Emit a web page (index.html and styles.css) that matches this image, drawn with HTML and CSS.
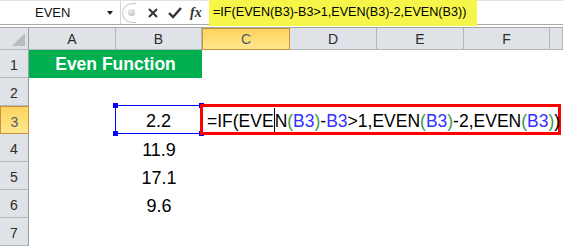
FILE: index.html
```html
<!DOCTYPE html>
<html lang="en">
<head>
  <meta charset="UTF-8">
  <title>Even Function</title>
  <link rel="stylesheet" href="styles.css">
</head>
<body>
  <!-- Formula Bar -->
  <div class="formula-bar">
    <div class="name-box">
      <span class="name">EVEN</span>
      <span class="drop"></span>
    </div>
    <div class="bar-tools">
      <span class="grip"><span class="grip-dot"></span></span>
      <svg class="tool" width="12" height="12" viewBox="0 0 12 12">
        <path d="M2 2 L10 10 M10 2 L2 10" stroke="#333" stroke-width="2" fill="none"/>
      </svg>
      <svg class="tool" width="14" height="12" viewBox="0 0 14 12">
        <path d="M1 6 L5 10 L13 1" stroke="#333" stroke-width="2.4" fill="none"/>
      </svg>
      <span class="fx">fx</span>
    </div>
    <div class="formula-input">
      <span class="formula-mark">=IF(EVEN(B3)-B3&gt;1,EVEN(B3)-2,EVEN(B3))</span>
    </div>
  </div>
  <div class="bar-gap"></div>

  <!-- Sheet -->
  <div class="sheet">
    <div class="corner"><span class="corner-tri"></span></div>
    <div class="ch">A</div>
    <div class="ch">B</div>
    <div class="ch active">C</div>
    <div class="ch">D</div>
    <div class="ch">E</div>
    <div class="ch">F</div>
    <div class="ch"></div>

    <div class="rh">1</div>
    <div class="title">Even Function</div>
    <div class="rest"></div>

    <div class="rh">2</div>
    <div class="cell"></div>
    <div class="cell"></div>
    <div class="rest"></div>

    <div class="rh active">3</div>
    <div class="cell"></div>
    <div class="cell selected">
      2.2
      <span class="handle tl"></span>
      <span class="handle tr"></span>
      <span class="handle bl"></span>
      <span class="handle br"></span>
    </div>
    <div class="rest editing">=IF(EVE<span class="caret"></span>N<span class="paren">(</span><span class="ref">B3</span><span class="paren">)</span>-<span class="ref">B3</span>&gt;1,EVEN<span class="paren">(</span><span class="ref">B3</span><span class="paren">)</span>-2,EVEN<span class="paren">(</span><span class="ref">B3</span><span class="paren">)</span>)</div>

    <div class="rh">4</div>
    <div class="cell"></div>
    <div class="cell">11.9</div>
    <div class="rest"></div>

    <div class="rh">5</div>
    <div class="cell"></div>
    <div class="cell">17.1</div>
    <div class="rest"></div>

    <div class="rh">6</div>
    <div class="cell"></div>
    <div class="cell">9.6</div>
    <div class="rest"></div>

    <div class="rh">7</div>
    <div class="cell"></div>
    <div class="cell"></div>
    <div class="rest"></div>
  </div>
</body>
</html>
```

FILE: styles.css
```css
/* Global Styles */
* {
  margin: 0;
  padding: 0;
  box-sizing: border-box;
}

body {
  background-color: #fff;
  color: #000;
  font-family: "Liberation Sans", Arial, sans-serif;
  overflow: hidden;
}

/* Formula Bar */
.formula-bar {
  display: flex;
  align-items: flex-start;
  height: 25px;
  border-top: 1px solid #e2e2e2;
  border-bottom: 1px solid #a9a9a9;
  background-color: #fff;
}

.name-box {
  width: 121px;
  height: 23px;
  display: flex;
  align-items: center;
  border-right: 1px solid #d4d4d4;
  position: relative;
}

.name {
  font-size: 13px;
  color: #111;
  margin-left: 35px;
}

.drop {
  position: absolute;
  right: 7px;
  top: 10px;
  border-left: 3.5px solid transparent;
  border-right: 3.5px solid transparent;
  border-top: 4px solid #222;
}

.bar-tools {
  width: 87px;
  height: 23px;
  display: flex;
  align-items: center;
}

.grip {
  width: 14px;
  height: 20px;
  margin-left: 1px;
  border: 1px solid #c6c6c6;
  border-right: none;
  border-radius: 10px 0 0 10px;
  display: flex;
  align-items: center;
  justify-content: center;
}

.grip-dot {
  width: 7px;
  height: 7px;
  border-radius: 50%;
  background: radial-gradient(circle at 40% 35%, #f0f0f0, #b4b4b4);
  margin-left: 3px;
}

.tool {
  margin-left: 11px;
}

.tool + .tool {
  margin-left: 9px;
}

.fx {
  font-family: "Liberation Serif", serif;
  font-style: italic;
  font-weight: bold;
  font-size: 14px;
  color: #333;
  margin-left: 8px;
}

.formula-input {
  flex: 1;
  padding-left: 1px;
}

.formula-mark {
  display: inline-block;
  height: 26px;
  margin-top: -1px;
  padding: 0 11px 0 4px;
  line-height: 24px;
  font-size: 12.6px;
  background-color: #f6f64a;
  position: relative;
  z-index: 1;
}

.bar-gap {
  height: 3px;
  border-bottom: 1px solid #a5a5a5;
}

/* Sheet Grid */
.sheet {
  display: grid;
  grid-template-columns: 29px 87px 86px 88px 87px 87px 86px 1fr;
  grid-template-rows: 22px repeat(7, 28px);
}

.corner,
.ch,
.rh {
  background-color: #dfe2e6;
  border-right: 1px solid #b3b7bc;
  border-bottom: 1px solid #b3b7bc;
  color: #2b2b2b;
  font-size: 14px;
  display: flex;
  align-items: center;
  justify-content: center;
}

.corner {
  position: relative;
  border-right-color: #9a9ea3;
}

.corner-tri {
  position: absolute;
  right: 3px;
  bottom: 3px;
  border-left: 13px solid transparent;
  border-bottom: 13px solid #b9bdc2;
}

.rh {
  border-right-color: #9a9ea3;
  padding-top: 3px;
}

.ch.active,
.rh.active {
  background: linear-gradient(#fdd35e, #ffe78e);
  border: 1px solid #c8923e;
  color: #4a5a6a;
}

.cell,
.rest {
  font-size: 18px;
  display: flex;
  align-items: center;
  justify-content: center;
  padding-top: 4px;
}

.rest {
  grid-column: 4 / -1;
}

.title {
  grid-column: 2 / 4;
  background-color: #00b050;
  color: #fff;
  font-weight: bold;
  font-size: 17.5px;
  display: flex;
  align-items: center;
  justify-content: center;
}

/* Selected cell */
.cell.selected {
  position: relative;
  border: 1px solid #0000ff;
  margin: -1px 0 0 -1px;
  padding-top: 3px;
}

.handle {
  position: absolute;
  width: 5px;
  height: 5px;
  background-color: #0000ff;
}

.handle.tl { left: -3px; top: -3px; }
.handle.tr { right: -3px; top: -3px; }
.handle.bl { left: -3px; bottom: -3px; }
.handle.br { right: -3px; bottom: -3px; }

/* Cell being edited */
.rest.editing {
  justify-content: flex-start;
  margin: -2px 2px -1px -2px;
  border: 3px solid #ff0000;
  padding: 3px 0 0 4px;
  font-size: 17.5px;
  white-space: nowrap;
  position: relative;
  z-index: 1;
  background-color: #fff;
}

.caret {
  display: inline-block;
  width: 0;
  height: 24px;
  border-left: 1px solid #000;
  margin-top: -3px;
}

.paren {
  color: #3f9a3f;
}

.ref {
  color: #3333ff;
}
```
